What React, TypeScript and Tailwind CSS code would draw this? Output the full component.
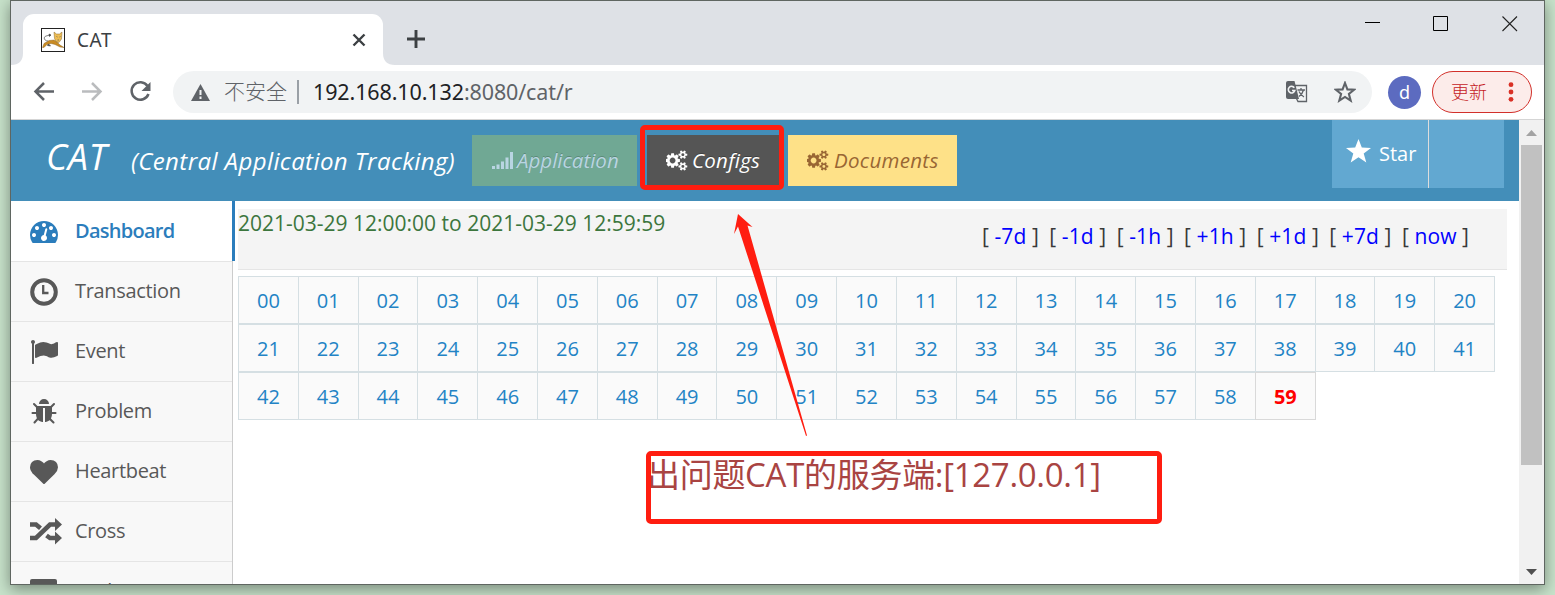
import React from "react";

const icons = {
  dashboard: "M384 1152q0-53-37.5-90.5t-90.5-37.5-90.5 37.5-37.5 90.5 37.5 90.5 90.5 37.5 90.5-37.5 37.5-90.5zm192-448q0-53-37.5-90.5t-90.5-37.5-90.5 37.5-37.5 90.5 37.5 90.5 90.5 37.5 90.5-37.5 37.5-90.5zm428 481l101-382q6-26-7.5-48.5t-38.5-29.5-48 6.5-30 39.5l-101 382q-60 5-107 43.5t-63 98.5q-20 77 20 146t117 89 146-20 89-117q16-60-6-117t-72-91zm660-33q0-53-37.5-90.5t-90.5-37.5-90.5 37.5-37.5 90.5 37.5 90.5 90.5 37.5 90.5-37.5 37.5-90.5zm-640-640q0-53-37.5-90.5t-90.5-37.5-90.5 37.5-37.5 90.5 37.5 90.5 90.5 37.5 90.5-37.5 37.5-90.5zm448 192q0-53-37.5-90.5t-90.5-37.5-90.5 37.5-37.5 90.5 37.5 90.5 90.5 37.5 90.5-37.5 37.5-90.5zm320 448q0 261-141 483-19 29-54 29h-1402q-35 0-54-29-141-221-141-483 0-182 71-348t191-286 286-191 348-71 348 71 286 191 191 286 71 348z",
  cogs: "M832 896q0-106-75-181t-181-75-181 75-75 181 75 181 181 75 181-75 75-181zm768 512q0-52-38-90t-90-38-90 38-38 90q0 53 37.5 90.5t90.5 37.5 90.5-37.5 37.5-90.5zm0-1024q0-52-38-90t-90-38-90 38-38 90q0 53 37.5 90.5t90.5 37.5 90.5-37.5 37.5-90.5zm-384 421v185q0 10-7 19.5t-16 10.5l-155 24q-11 35-32 76 34 48 90 115 7 11 7 20 0 12-7 19-23 30-82.5 89.5t-78.5 59.5q-11 0-21-7l-115-90q-37 19-77 31-11 108-23 155-7 24-30 24h-186q-11 0-20-7.5t-10-17.5l-23-153q-34-10-75-31l-118 89q-7 7-20 7-11 0-21-8-144-133-144-160 0-9 7-19 10-14 41-53t47-61q-23-44-35-82l-152-24q-10-1-17-9.5t-7-19.5v-185q0-10 7-19.5t16-10.5l155-24q11-35 32-76-34-48-90-115-7-11-7-20 0-12 7-20 22-30 82-89t79-59q11 0 21 7l115 90q34-18 77-32 11-108 23-154 7-24 30-24h186q11 0 20 7.5t10 17.5l23 153q34 10 75 31l118-89q8-7 20-7 11 0 21 8 144 133 144 160 0 8-7 19-12 16-42 54t-45 60q23 48 34 82l152 23q10 2 17 10.5t7 19.5zm640 533v140q0 16-149 31-12 27-30 52 51 113 51 138 0 4-4 7-122 71-124 71-8 0-46-47t-52-68q-20 2-30 2t-30-2q-14 21-52 68t-46 47q-2 0-124-71-4-3-4-7 0-25 51-138-18-25-30-52-149-15-149-31v-140q0-16 149-31 13-29 30-52-51-113-51-138 0-4 4-7 4-2 35-20t59-34 30-16q8 0 46 46.5t52 67.5q20-2 30-2t30 2q51-71 92-112l6-2q4 0 124 70 4 3 4 7 0 25-51 138 17 23 30 52 149 15 149 31zm0-1024v140q0 16-149 31-12 27-30 52 51 113 51 138 0 4-4 7-122 71-124 71-8 0-46-47t-52-68q-20 2-30 2t-30-2q-14 21-52 68t-46 47q-2 0-124-71-4-3-4-7 0-25 51-138-18-25-30-52-149-15-149-31v-140q0-16 149-31 13-29 30-52-51-113-51-138 0-4 4-7 4-2 35-20t59-34 30-16q8 0 46 46.5t52 67.5q20-2 30-2t30 2q51-71 92-112l6-2q4 0 124 70 4 3 4 7 0 25-51 138 17 23 30 52 149 15 149 31z",
  bug: "M1696 960q0 26-19 45t-45 19h-224q0 171-67 290l208 209q19 19 19 45t-19 45q-18 19-45 19t-45-19l-198-197q-5 5-15 13t-42 28.5-65 36.5-82 29-97 13v-896h-128v896q-51 0-101.5-13.5t-87-33-66-39-43.5-32.5l-15-14-183 207q-20 21-48 21-24 0-43-16-19-18-20.5-44.5t15.5-46.5l202-227q-58-114-58-274h-224q-26 0-45-19t-19-45 19-45 45-19h224v-294l-173-173q-19-19-19-45t19-45 45-19 45 19l173 173h844l173-173q19-19 45-19t45 19 19 45-19 45l-173 173v294h224q26 0 45 19t19 45zm-480-576h-640q0-133 93.5-226.5t226.5-93.5 226.5 93.5 93.5 226.5z",
  flag: "M320 256q0 72-64 110v1266q0 13-9.5 22.5t-22.5 9.5h-64q-13 0-22.5-9.5t-9.5-22.5v-1266q-64-38-64-110 0-53 37.5-90.5t90.5-37.5 90.5 37.5 37.5 90.5zm1472 64v763q0 25-12.5 38.5t-39.5 27.5q-215 116-369 116-61 0-123.5-22t-108.5-48-115.5-48-142.5-22q-192 0-464 146-17 9-33 9-26 0-45-19t-19-45v-742q0-32 31-55 21-14 79-43 236-120 421-120 107 0 200 29t219 88q38 19 88 19 54 0 117.5-21t110-47 88-47 54.5-21q26 0 45 19t19 45z",
  heart: "M896 1664q-26 0-44-18l-624-602q-10-8-27.5-26t-55.5-65.5-68-97.5-53.5-121-23.5-138q0-220 127-344t351-124q62 0 126.5 21.5t120 58 95.5 68.5 76 68q36-36 76-68t95.5-68.5 120-58 126.5-21.5q224 0 351 124t127 344q0 221-229 450l-623 600q-18 18-44 18z",
};

function Glyph({ d, className, viewBox = "0 0 1792 1792" }: { d: string; className: string; viewBox?: string }) {
  return <svg viewBox={viewBox} className={className} fill="currentColor"><path d={d} /></svg>;
}

function Favicon() {
  return (
    <svg width="24" height="24" viewBox="0 0 24 24">
      <rect x=".5" y=".5" width="23" height="23" fill="#fff" stroke="#222" />
      <path d="M1.500 19.500 3 15.500 8 12.500l5-.5 3 2 3 3 4 2.500-4-.5-5-2.500-4-1-4 1-3 3z" fill="#c98b23" stroke="#7b5618" strokeWidth=".4" />
      <path d="m13 4 2.500 2h3L21 4l-.5 7-2.500 3.500-3-1-1.500-3z" fill="#eebd52" stroke="#8a6a35" strokeWidth=".5" />
      <path d="M7 13C3 13 2 9 5 8l4-1" fill="none" stroke="#666" strokeWidth=".8" />
      <path d="m8 6 2 1-1.500 1.500zM7.500 16l2 2-3-.5zM15.500 8.500l1 .5M18.500 9l1-.5M16.500 12h1.500" fill="#222" stroke="#555" strokeWidth=".7" />
    </svg>
  );
}

function TitleBar() {
  return (
    <div className="flex h-[64px] bg-[#dee1e6]">
      <svg className="mt-[52px] shrink-0" width="12" height="12"><path d="M12 0v12H0Q12 12 12 0" fill="#fff" /></svg>
      <div className="mt-[13px] flex h-[51px] w-[360px] shrink-0 items-center rounded-t-[11px] bg-white pl-[18px] pr-[17px]">
        <Favicon />
        <span className="ml-3 pt-[2px] text-[19px] tracking-[0.600px] text-[#3c4043]">CAT</span>
        <svg className="ml-auto" width="14" height="14"><path d="m1.500 1.500 11 11m0-11-11 11" stroke="#3c4043" strokeWidth="2.400" /></svg>
      </div>
      <svg className="mt-[52px] shrink-0" width="12" height="12"><path d="M0 0v12h12Q0 12 0 0" fill="#fff" /></svg>
      <svg className="ml-[12px] mt-[29px]" width="18" height="18"><path d="M0 9h18M9 0v18" stroke="#3c4043" strokeWidth="2.900" /></svg>
      <div className="ml-auto flex pr-[26px] pt-[14px]">
        <svg width="153" height="18">
          <path d="M0 7.500h15M68.500 1.500h14v14h-14z" stroke="#000" fill="none" />
          <path d="m137.500 1.500 14.500 14.500m0-14.500-14.500 14.500" stroke="#222" strokeWidth="1.100" />
        </svg>
      </div>
    </div>
  );
}

function TranslateIcon() {
  return (
    <svg width="22" height="22" viewBox="0 0 22 22">
      <path d="M9 4.500h11.500v16H12l-2-4z" fill="#f1f3f4" stroke="#5f6368" strokeWidth="1.300" />
      <path d="M2 0h6.500L13 18H2Q0 18 0 16V2Q0 0 2 0" fill="#5f6368" />
      <path d="M8.300 6.700a3.300 3.300 0 1 0 .5 2.800H6" fill="none" stroke="#f1f3f4" strokeWidth="1.600" />
      <path d="M11.500 9h7.500M15 7v2M17.500 9q-1 4-4.500 6.500m0-5q2 4 5 5.500" fill="none" stroke="#5f6368" strokeWidth="1.300" />
    </svg>
  );
}

function Toolbar() {
  return (
    <div className="flex h-[55px] items-center border-b border-[#d5d5d5] bg-white">
      <svg className="ml-[22px] shrink-0" width="120" height="24" fill="none" strokeWidth="2.500">
        <path d="M21 11.500H2.500m8.500-8.500-8.500 8.500L11 20" stroke="#5f6368" />
        <path d="M49 11.500h18.500m-8.500-8.500 8.500 8.500L59 20" stroke="#babcbe" />
        <path d="M114.500 6A8.700 8.700 0 1 0 115.500 14" stroke="#5f6368" />
        <path d="M117.500 2v9h-9z" fill="#5f6368" />
      </svg>
      <div className="ml-[20px] flex h-[42px] w-[1199px] shrink-0 items-center rounded-full bg-[#f1f3f4] pl-[18px] pr-[16px]">
        <svg width="19" height="17"><path d="M9.500 0 19 17H0z" fill="#5f6368" /><path d="M9.500 6v5m0 1.500V15" stroke="#f1f3f4" strokeWidth="2" /></svg>
        <span className="ml-[14px] w-[64px] font-light text-[21px] text-[#5f6368]">不安全</span>
        <div className="ml-[9px] h-6 w-[2px] bg-[#9aa0a6]" />
        <span className="ml-[14px] text-[21.500px] tracking-[-0.120px] text-[#202124]">192.168.10.132<span className="text-[#5f6368]">:8080/cat/r</span></span>
        <div className="ml-auto flex items-center gap-[26px]">
          <TranslateIcon />
          <svg width="22" height="22" viewBox="0 0 22 22"><path d="m11 2 2.400 6.400 6.800.3-5.300 4.300 1.800 6.600L11 15.900l-5.700 3.700 1.800-6.600-5.300-4.300 6.800-.3z" fill="none" stroke="#5f6368" strokeWidth="2.100" /></svg>
        </div>
      </div>
      <div className="ml-[16px] flex size-[33px] shrink-0 items-center justify-center rounded-full bg-[#5c6bc0] text-[18px] text-white">d</div>
      <div className="ml-[11px] flex h-[42px] w-[100px] shrink-0 items-center rounded-full border-[1.500px] border-[#d2302a] bg-[#fcecea] pl-[18px]">
        <span className="font-light text-[18px] text-[#c5221f]">更新</span>
        <svg className="ml-[21px]" width="6" height="20" fill="#d93025"><circle cx="3" cy="2.700" r="2.400" /><circle cx="3" cy="10" r="2.400" /><circle cx="3" cy="17.300" r="2.400" /></svg>
      </div>
    </div>
  );
}

function Header() {
  return (
    <header className="flex h-[81px] shrink-0 bg-[#438eb9] text-white">
      <div className="flex w-[461px] shrink-0 items-baseline whitespace-nowrap pl-[35px] pt-[12px] italic leading-[50px]">
        <span className="w-[62px] text-[36px] tracking-[0.700px]">CAT</span>
        <span className="ml-[23px] text-[24px] tracking-[0.400px]">(Central Application Tracking)</span>
      </div>
      <nav className="flex pt-[15px] text-[20.500px] italic">
        <div className="flex h-[51px] w-[165px] items-center bg-[#70a894] pl-[20px] text-[#b9d5e2] [text-shadow:0_-1px_0_rgba(0,0,0,.2)]">
          <svg width="21" height="17" fill="currentColor"><path d="M0 14h3v3H0zm4.500-1.500h3V17h-3zM9 9.500h3V17H9zm4.500-4h3V17h-3zM18 0h3v17h-3z" /></svg>
          <span className="ml-[4px]">Application</span>
        </div>
        <div className="ml-[10px] flex h-[51px] w-[132px] items-center bg-[#555] pl-[19px] [text-shadow:0_-1px_0_rgba(0,0,0,.25)]">
          <Glyph d={icons.cogs} viewBox="0 0 1920 1792" className="h-[21px] w-[22px]" /><span className="ml-[4px] tracking-[0.250px]">Configs</span>
        </div>
        <div className="ml-[9px] flex h-[51px] w-[169px] items-center bg-[#fee188] pl-[19px] text-[#996633]">
          <Glyph d={icons.cogs} viewBox="0 0 1920 1792" className="h-[21px] w-[22px]" /><span className="ml-[5px] tracking-[0.300px]">Documents</span>
        </div>
      </nav>
      <div className="ml-auto mr-[15px] flex h-[68px] bg-[#62a8d1]">
        <div className="flex w-[97px] items-center border-r border-[#ddd] pl-[14px]">
          <svg className="mb-[6px]" width="25" height="24" viewBox="0 0 25 24" fill="#fff"><path d="m12.500 0 3.300 8.600 9.200.3-7.300 5.600 2.600 9-7.800-5.200-7.800 5.200 2.600-9L0 8.900l9.200-.3z" /></svg>
          <span className="ml-[8px] text-[20px]">Star</span>
        </div>
        <div className="w-[75px]" />
      </div>
    </header>
  );
}

const nav: { name: string; icon: React.ReactNode }[] = [
  { name: "Dashboard", icon: <Glyph d={icons.dashboard} className="size-[28px]" /> },
  { name: "Transaction", icon: <svg width="28" height="28" fill="none" stroke="currentColor"><circle cx="14" cy="14" r="11.800" strokeWidth="4" /><path d="M13.200 7v8H18.500" strokeWidth="2.300" /></svg> },
  { name: "Event", icon: <Glyph d={icons.flag} className="size-[28px]" /> },
  { name: "Problem", icon: <Glyph d={icons.bug} className="size-[28px]" /> },
  { name: "Heartbeat", icon: <Glyph d={icons.heart} className="size-[28px]" /> },
  { name: "Cross", icon: <svg width="33" height="27" viewBox="0 0 33 27"><g fill="none" stroke="currentColor" strokeWidth="4.600"><path d="M0 6.500h6l4.500 3.700M0 20h6L20 6.500h6M16.500 17.500 20 20h6" /></g><path d="m25 0 7 6.500-7 6.500zM25 13.500l7 6.500-7 6.500z" fill="currentColor" /></svg> },
  { name: "Cache", icon: <svg width="28" height="26" fill="currentColor"><rect width="27" height="26" rx="2" /></svg> },
];

function Sidebar() {
  return (
    <aside className="flex w-[222px] shrink-0 flex-col overflow-hidden border-r border-[#ccc] bg-[#f8f8f8] text-[20px] text-[#585858]">
      {nav.map((n, i) => (
        <div key={n.name} className={i === 0 ? "flex h-[61px] shrink-0 items-center border-b border-[#e5e5e5] bg-white pl-[19px] text-[#2b7dbc]" : "flex h-[60px] shrink-0 items-center border-b border-[#e5e5e5] pl-[19px]"}>
          <span className="flex w-[45px]">{n.icon}</span>
          <span className={i === 0 ? "font-semibold tracking-[-0.730px]" : "pb-px tracking-[-0.330px]"}>{n.name}</span>
        </div>
      ))}
    </aside>
  );
}

const minutes = Array.from({ length: 60 }, (_, i) => String(i).padStart(2, "0"));
const jumps = ["-7d", "-1d", "-1h", "+1h", "+1d", "+7d", "now"];

function Report() {
  return (
    <main className="min-w-0 flex-1 bg-white pl-[5px] pt-2">
      <div className="flex h-[61px] w-[1269px] justify-between border-b border-[#e5e5e5] bg-[#f4f4f4] text-[21px]">
        <span className="leading-[29px] text-[#3c763d]">2021-03-29 12:00:00 to 2021-03-29 12:59:59</span>
        <div className="flex gap-[10.500px] pr-[38px] pt-[13px] leading-[29px] text-[#393939]">
          {jumps.map((j) => <span key={j} className="tracking-[0.080px]">[ <span className="text-[#00f]">{j}</span> ]</span>)}
        </div>
      </div>
      <div className="mt-[6px] grid w-[1256px] grid-cols-21 text-[20px] leading-none text-[#2283c5]">
        {minutes.map((m) => (
          <div key={m} className={m === "59" ? "-mr-px flex h-12 items-center justify-center border border-[#d9d9d9] bg-[#fafafa] pt-[2px] font-bold tracking-[-0.400px] text-[#f00]" : "-mr-px flex h-12 items-center justify-center border border-[#d5dfe3] bg-[#fafafa] pt-[2px]"}>{m}</div>
        ))}
      </div>
      <h3 className="ml-[409px] mt-[31px] whitespace-nowrap text-[33px] leading-[48px] tracking-[-0.300px] text-[#a94442]">出问题CAT的服务端:[127.0.0.1]</h3>
    </main>
  );
}

function Scrollbar() {
  return (
    <div className="flex w-[25px] shrink-0 flex-col items-center bg-[#f1f1f1]">
      <svg className="mt-[10px] shrink-0" width="11" height="6"><path d="m5.500 0 5.500 6H0z" fill="#a3a3a3" /></svg>
      <div className="mt-[9px] h-[320px] w-[21px] bg-[#c1c1c1]" />
      <svg className="mb-[9px] mt-auto shrink-0" width="11" height="6"><path d="m5.500 6 5.500-6H0z" fill="#505050" /></svg>
    </div>
  );
}

export default function App() {
  return (
    <div className="relative h-[595px] w-[1555px] overflow-hidden bg-[#c7e2ca] px-[10px] pb-[10px] font-['Open_Sans','Noto_Sans_CJK_SC',sans-serif]">
      <div className="flex h-[585px] w-[1535px] flex-col overflow-hidden border border-[#5f6661] shadow-[0_4px_14px_rgba(0,0,0,.4)]">
        <div className="shrink-0 font-['Noto_Sans','Noto_Sans_CJK_SC',sans-serif]">
          <TitleBar />
          <Toolbar />
        </div>
        <div className="flex min-h-0 flex-1">
          <div className="flex min-w-0 flex-1 flex-col bg-white">
            <Header />
            <div className="flex min-h-0 flex-1"><Sidebar /><Report /></div>
          </div>
          <Scrollbar />
        </div>
      </div>
      <div className="absolute left-[232px] top-[201px] h-[60px] w-[3px] bg-[#2b7dbc]" />
      <div className="absolute left-[640px] top-[125px] h-[65px] w-[144px] rounded-[5px] border-[5px] border-[#ff1d10]" />
      <div className="absolute left-[646px] top-[451px] h-[73px] w-[516px] rounded-[5px] border-[5px] border-[#ff1d10]" />
      <svg className="absolute left-[730px] top-[212px]" width="82" height="228"><path d="m8 2 14.500 13-5-1.500L77 223.500l-1 .5L8 14.500 4 22z" fill="#ff1d10" /></svg>
    </div>
  );
}
